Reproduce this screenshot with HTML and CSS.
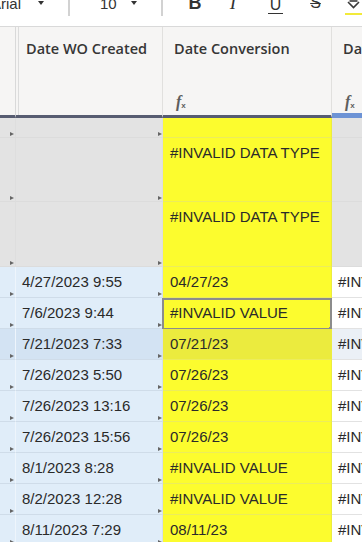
FILE: index.html
```html
<!DOCTYPE html>
<html lang="en">

<head>
    <meta charset="UTF-8">
    <meta name="viewport" content="width=device-width, initial-scale=1.0">
    <title>Sheet - Date Conversion</title>
    <link rel="stylesheet" href="styles.css">
</head>

<body>
    <!-- formatting toolbar (scrolled, top half hidden) -->
    <div class="toolbar">
        <div class="tools">
            <span class="font-name">Arial</span>
            <span class="caret caret-font"></span>
            <span class="sep sep-1"></span>
            <span class="font-size">10</span>
            <span class="caret caret-size"></span>
            <span class="sep sep-2"></span>
            <span class="tool bold">B</span>
            <span class="tool italic">I</span>
            <span class="tool under">U</span>
            <span class="tool strike">S</span>
            <span class="tool fill">
                <svg width="17" height="16" viewBox="0 0 17 16">
                    <path d="M3 2 L8.5 7.5 L14 2" fill="none" stroke="#3a3a3a" stroke-width="1.6" />
                    <path d="M4.5 1 L12.5 1" stroke="#3a3a3a" stroke-width="1.6" />
                    <rect x="0" y="13" width="17" height="2" fill="#f2ea3a" />
                </svg>
            </span>
        </div>
    </div>

    <div class="sheet">
        <!-- column headers -->
        <div class="row head">
            <div class="hcell c-gutter"></div>
            <div class="hcell c-created">
                <span class="title">Date WO Created</span>
            </div>
            <div class="hcell c-conv">
                <span class="title">Date Conversion</span>
                <span class="fx"><i>f</i><sub>x</sub></span>
            </div>
            <div class="hcell c-next">
                <span class="title">Date Status</span>
                <span class="fx"><i>f</i><sub>x</sub></span>
            </div>
        </div>

        <!-- rows -->
        <div class="row blank cut">
            <div class="cell c-gutter"></div>
            <div class="cell c-created"></div>
            <div class="cell c-conv"></div>
            <div class="cell c-next"></div>
        </div>
        <div class="row blank tall">
            <div class="cell c-gutter"></div>
            <div class="cell c-created"></div>
            <div class="cell c-conv">#INVALID DATA TYPE</div>
            <div class="cell c-next"></div>
        </div>
        <div class="row blank tall taller">
            <div class="cell c-gutter"></div>
            <div class="cell c-created"></div>
            <div class="cell c-conv">#INVALID DATA TYPE</div>
            <div class="cell c-next"></div>
        </div>
        <div class="row">
            <div class="cell c-gutter"></div>
            <div class="cell c-created">4/27/2023 9:55</div>
            <div class="cell c-conv">04/27/23</div>
            <div class="cell c-next">#INVALID VALUE</div>
        </div>
        <div class="row">
            <div class="cell c-gutter"></div>
            <div class="cell c-created">7/6/2023 9:44</div>
            <div class="cell c-conv selected">#INVALID VALUE</div>
            <div class="cell c-next">#INVALID VALUE</div>
        </div>
        <div class="row hl">
            <div class="cell c-gutter"></div>
            <div class="cell c-created">7/21/2023 7:33</div>
            <div class="cell c-conv">07/21/23</div>
            <div class="cell c-next">#INVALID VALUE</div>
        </div>
        <div class="row">
            <div class="cell c-gutter"></div>
            <div class="cell c-created">7/26/2023 5:50</div>
            <div class="cell c-conv">07/26/23</div>
            <div class="cell c-next">#INVALID VALUE</div>
        </div>
        <div class="row">
            <div class="cell c-gutter"></div>
            <div class="cell c-created">7/26/2023 13:16</div>
            <div class="cell c-conv">07/26/23</div>
            <div class="cell c-next">#INVALID VALUE</div>
        </div>
        <div class="row">
            <div class="cell c-gutter"></div>
            <div class="cell c-created">7/26/2023 15:56</div>
            <div class="cell c-conv">07/26/23</div>
            <div class="cell c-next">#INVALID VALUE</div>
        </div>
        <div class="row">
            <div class="cell c-gutter"></div>
            <div class="cell c-created">8/1/2023 8:28</div>
            <div class="cell c-conv">#INVALID VALUE</div>
            <div class="cell c-next">#INVALID VALUE</div>
        </div>
        <div class="row">
            <div class="cell c-gutter"></div>
            <div class="cell c-created">8/2/2023 12:28</div>
            <div class="cell c-conv">#INVALID VALUE</div>
            <div class="cell c-next">#INVALID VALUE</div>
        </div>
        <div class="row">
            <div class="cell c-gutter"></div>
            <div class="cell c-created">8/11/2023 7:29</div>
            <div class="cell c-conv">08/11/23</div>
            <div class="cell c-next">#INVALID VALUE</div>
        </div>
    </div>
</body>

</html>
```

FILE: styles.css
```css
html,
body {
    margin: 0;
    padding: 0;
    overflow: hidden;
    background-color: #fff;
}

body {
    width: 362px;
    height: 542px;
    font-family: "Liberation Sans", Arial, sans-serif;
    color: #2a2a2a;
}

/* toolbar */

.toolbar {
    height: 26px;
    border-bottom: 1px solid #d9d9d9;
    overflow: hidden;
    background-color: #fff;
}

.tools {
    display: flex;
    align-items: center;
    height: 26px;
    margin-top: -10px;
    color: #333;
}

.font-name {
    margin-left: -9px;
    font-size: 15px;
    width: 30px;
    white-space: nowrap;
}

.caret {
    width: 0;
    height: 0;
    border-left: 3px solid transparent;
    border-right: 3px solid transparent;
    border-top: 4px solid #333;
}

.caret-font {
    margin-left: 17px;
}

.caret-size {
    margin-left: 14px;
}

.sep {
    width: 2px;
    height: 26px;
    background-color: #d2d2d2;
    margin-left: 24px;
}

.font-size {
    margin-left: 30px;
    width: 17px;
    font-size: 15px;
}

.tool {
    display: flex;
    justify-content: center;
    color: #333;
}

.bold {
    margin-left: 25px;
    width: 14px;
    font-weight: bold;
    font-size: 18px;
}

.italic {
    margin-left: 26px;
    width: 10px;
    font-family: "Liberation Serif", serif;
    font-style: italic;
    font-size: 19px;
}

.under {
    margin-left: 30px;
    width: 15px;
    font-size: 16px;
    line-height: 17px;
    border-bottom: 1.5px solid #333;
    margin-top: 4px;
}

.strike {
    margin-left: 25px;
    width: 15px;
    font-size: 16px;
    text-decoration: line-through;
}

.fill {
    margin-left: 22px;
    width: 17px;
    margin-top: 10px;
}

/* sheet */

.sheet {
    width: 452px;
}

.row {
    display: flex;
    height: 31px;
}

.cell,
.hcell {
    position: relative;
    box-sizing: border-box;
    flex: none;
    white-space: nowrap;
    overflow: hidden;
}

.c-gutter {
    width: 16px;
}

.c-created {
    width: 147px;
}

.c-conv {
    width: 169px;
}

.c-next {
    width: 120px;
}

/* header */

.row.head {
    height: 91px;
}

.hcell {
    display: flex;
    flex-direction: column;
    justify-content: space-between;
    background-color: #f6f5f4;
    border-right: 1px solid #e1e0de;
    border-bottom: 3px solid #575c71;
    padding: 12px 0 2px 10px;
    font-family: "Open Sans", "Noto Sans", sans-serif;
    font-weight: 600;
    font-size: 14.5px;
    color: #363636;
    line-height: 20px;
}

.hcell.c-gutter {
    padding: 0;
    border-right-color: #d9d9d9;
}

.hcell.c-created {
    box-shadow: inset 2px 0 0 #f6f5f4, inset 3px 0 0 #dcdcdc;
}

.hcell.c-conv,
.hcell.c-next {
    padding-left: 11px;
}

.hcell.c-next {
    border-bottom: 5px solid #6d93d5;
    padding-bottom: 0;
}

.fx {
    font-family: "Liberation Serif", serif;
    font-weight: bold;
    color: #5e5e5e;
    font-size: 16px;
    line-height: 14px;
    padding-left: 2px;
}

.fx sub {
    font-family: "Liberation Sans", sans-serif;
    font-size: 8px;
    font-weight: bold;
    vertical-align: -1px;
}

/* body cells */

.cell {
    padding: 6px 6px 0;
    font-size: 15px;
    line-height: 18px;
    border-right: 1px solid transparent;
    border-bottom: 1px solid transparent;
}

.cell.c-gutter {
    padding: 0;
    background-color: #e0edf9;
    border-right-color: #eef5fc;
    border-bottom-color: #cfdce9;
}

.cell.c-created {
    padding-left: 6px;
    background-color: #e0edf9;
    border-right-color: #d5e0ea;
    border-bottom-color: #cfdce9;
}

.cell.c-conv {
    padding-left: 7px;
    background-color: #fcfc2e;
    border-right-color: #ecec40;
    border-bottom-color: #ecec5c;
}

.cell.c-next {
    background-color: #fff;
    border-bottom-color: #e2e2e2;
}

/* little row-flag arrows */
.cell.c-gutter::after,
.cell.c-created::after {
    content: "";
    position: absolute;
    bottom: 1px;
    right: 1px;
    border-left: 4px solid #666;
    border-top: 2.5px solid transparent;
    border-bottom: 2.5px solid transparent;
}

.cell.c-created::after {
    right: 0;
}

.row.blank .cell.c-gutter,
.row.blank .cell.c-created,
.row.blank .cell.c-next {
    background-color: #e3e3e3;
    border-bottom-color: #dcdcdc;
    border-right-color: #dedede;
}

.row.blank .cell.c-next {
    border-right-color: #e3e3e3;
}

.row.cut {
    height: 20px;
}

.row.tall {
    height: 64px;
}

.row.taller {
    height: 65px;
}

.row.hl .cell.c-gutter,
.row.hl .cell.c-created {
    background-color: #d3e3f3;
}

.row.hl .cell.c-conv {
    background-color: #ebeb3e;
}

.row.hl .cell.c-next {
    background-color: #ebf0f6;
}

.cell.selected {
    overflow: visible;
}

.cell.selected::before {
    content: "";
    position: absolute;
    top: 0;
    left: -1px;
    right: -1px;
    bottom: -2px;
    border: 2px solid #8c8c8c;
}

.cell.selected::after {
    content: "";
    position: absolute;
    right: -2px;
    bottom: -3px;
    width: 4px;
    height: 4px;
    background-color: #8c8c8c;
}
```
